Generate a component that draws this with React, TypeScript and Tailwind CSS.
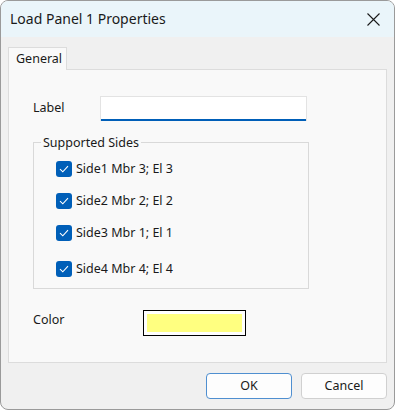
import React from "react";

const sides = [
  { text: "Side1 Mbr 3; El 3", mt: "mt-[18px]" },
  { text: "Side2 Mbr 2; El 2", mt: "mt-[16px]" },
  { text: "Side3 Mbr 1; El 1", mt: "mt-[16px]" },
  { text: "Side4 Mbr 4; El 4", mt: "mt-[20px]" },
];

function CheckBox() {
  return (
    <span className="flex h-[16px] w-[16px] shrink-0 items-center justify-center rounded-[3px] bg-[#005fb8]">
      <svg width="10" height="8" viewBox="0 0 10 8" fill="none">
        <path d="M1 4.2 L3.8 6.8 L9 1.2" stroke="#ffffff" strokeWidth="1.1" />
      </svg>
    </span>
  );
}

export default function App() {
  return (
    <div className="h-[410px] w-[395px] bg-white" style={{ fontFamily: "'Noto Sans', 'Segoe UI', sans-serif" }}>
      <div className="flex h-full w-full flex-col overflow-hidden rounded-[8px] border border-[#9a9a9a] bg-[#f0f0f0] text-[#1a1a1a]">
        {/* title bar */}
        <div className="flex h-[36px] shrink-0 items-center justify-between bg-[#eaf5fa] pl-[9px] pr-[14px]">
          <span className="text-[14px] leading-none">Load Panel 1 Properties</span>
          <svg width="13" height="13" viewBox="0 0 13 13">
            <path d="M0.5 0.5 L12.5 12.5 M12.5 0.5 L0.5 12.5" stroke="#1a1a1a" strokeWidth="1.1" />
          </svg>
        </div>

        {/* tabs */}
        <div className="px-[7px] pt-[10px]">
          <div className="flex">
            <div className="relative z-10 -mb-px flex h-[23px] w-[59px] items-center border border-b-0 border-[#dcdcdc] bg-[#f9f9f9] pl-[7px] text-[12.5px]">
              General
            </div>
          </div>
          <div className="h-[294px] border border-[#dcdcdc] bg-[#f9f9f9] pl-[24px] pt-[26px]">
            {/* label row */}
            <div className="flex items-start">
              <span className="mt-[3px] w-[67px] text-[12.5px]">Label</span>
              <div className="h-[25px] w-[207px] border border-b-0 border-[#e3e3e3] bg-white">
                <div className="mt-[22px] h-[2px] bg-[#005fb8]" />
              </div>
            </div>

            {/* group box */}
            <div className="relative mt-[21px] h-[147px] w-[276px] border border-[#d9d9d9] pl-[22px]">
              <span className="absolute -top-[8px] left-[7px] bg-[#f9f9f9] px-[2px] text-[12.5px] leading-[16px]">
                Supported Sides
              </span>
              {sides.map((s) => (
                <div key={s.text} className={`flex items-center gap-[4px] ${s.mt}`}>
                  <CheckBox />
                  <span className="text-[12.5px] leading-[16px]">{s.text}</span>
                </div>
              ))}
            </div>

            {/* color row */}
            <div className="mt-[23px] flex items-start">
              <span className="w-[110px] text-[12.5px] leading-[16px]">Color</span>
              <div className="-mt-[2px] h-[26px] w-[103px] border border-black bg-white p-[3px]">
                <div className="h-full w-full bg-[#ffff80]" />
              </div>
            </div>
          </div>
        </div>

        {/* buttons */}
        <div className="flex justify-end gap-[9px] pr-[7px] pt-[10px]">
          <button className="h-[26px] w-[86px] rounded-[4px] border border-[#4f8fd0] bg-[#fdfdfd] text-[12.5px]">
            OK
          </button>
          <button className="h-[26px] w-[86px] rounded-[4px] border border-[#d0d0d0] bg-[#fdfdfd] text-[12.5px]">
            Cancel
          </button>
        </div>
      </div>
    </div>
  );
}
